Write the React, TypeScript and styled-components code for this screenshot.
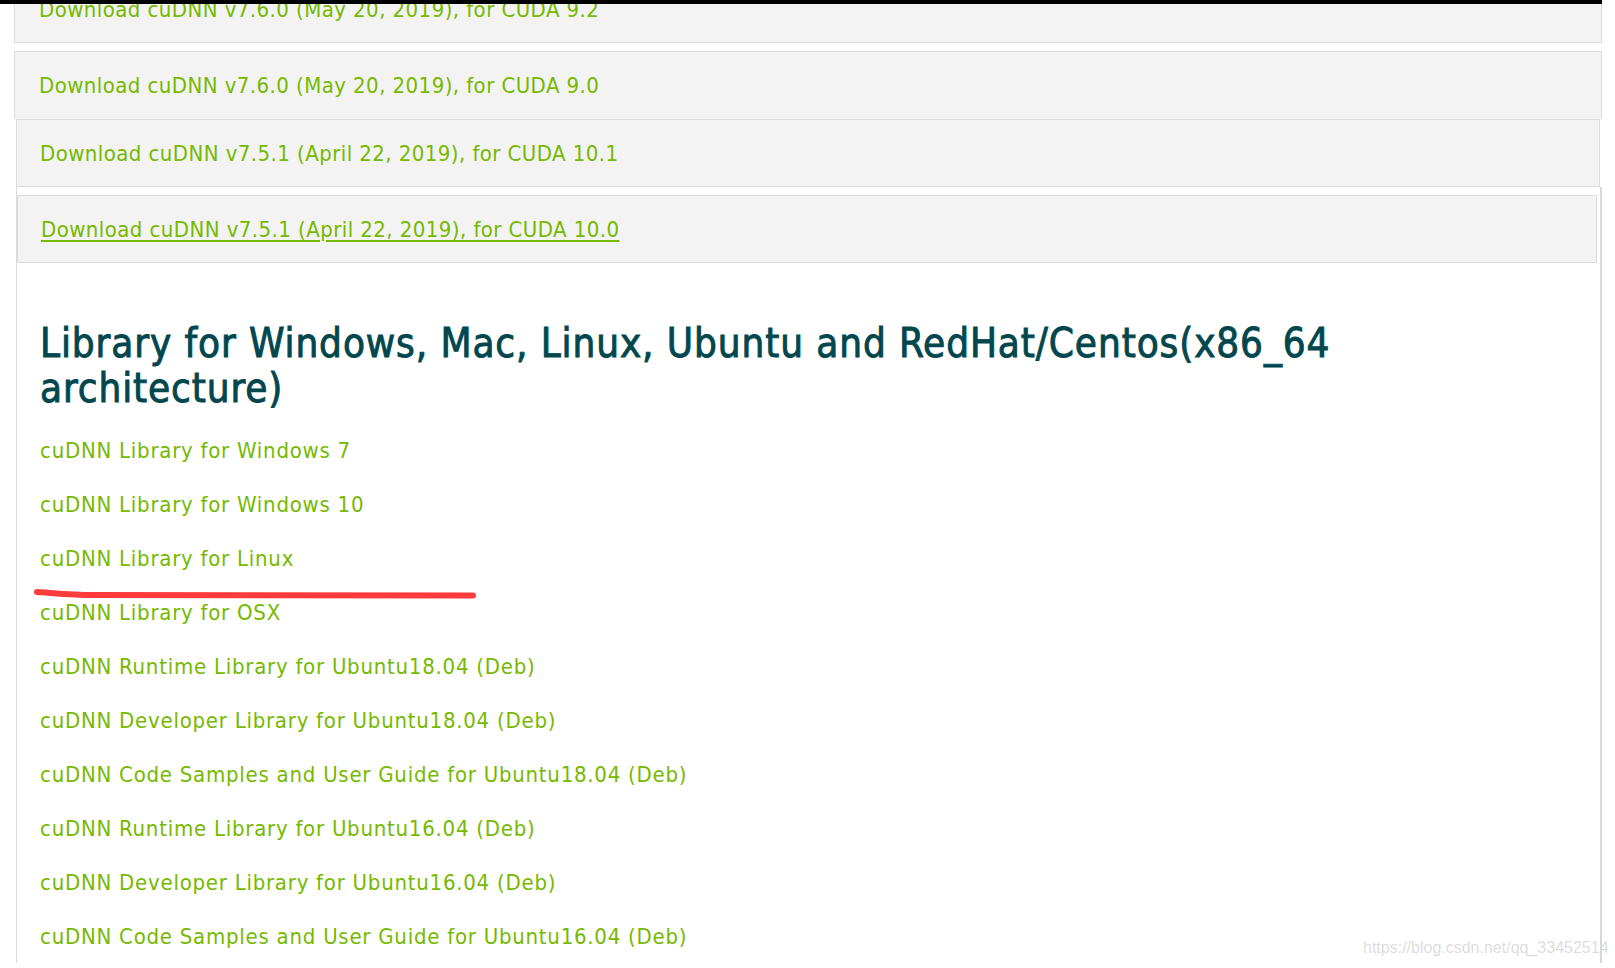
import React from 'react';
import styled, { createGlobalStyle } from 'styled-components';

const GlobalStyle = createGlobalStyle`
  html, body {
    margin: 0;
    padding: 0;
    background: #ffffff;
    overflow: hidden;
  }
  body {
    font-family: "DejaVu Sans Condensed", "Liberation Sans", sans-serif;
  }
`;

const Page = styled.div`
  position: relative;
  width: 1615px;
  height: 968px;
  overflow: hidden;
`;

const Content = styled.div`
  width: 1602px;
`;

const TopBar = styled.div`
  position: relative;
  z-index: 2;
  height: 4px;
  background: #000000;
`;

const Accordion = styled.div`
  display: flex;
  flex-direction: column;
`;

const Item = styled.div<{ $inset?: boolean; $first?: boolean; $open?: boolean }>`
  display: flex;
  align-items: center;
  box-sizing: border-box;
  height: 68px;
  margin-left: ${(p) => (p.$open ? '0' : p.$inset ? '16px' : '14px')};
  margin-right: ${(p) => (p.$open ? '3px' : p.$inset ? '2px' : '0')};
  margin-top: ${(p) => (p.$first ? '-29px' : '0')};
  margin-bottom: ${(p) => (p.$first ? '8px' : '0')};
  padding-left: ${(p) => (p.$inset || p.$open ? '23px' : '24px')};
  background: #f3f3f3;
  border: 1px solid #dcdcdc;
  border-bottom: ${(p) => (p.$first || p.$inset || p.$open ? '1px solid #dcdcdc' : 'none')};
`;

const ItemLink = styled.a<{ $underline?: boolean; $list?: boolean }>`
  font-size: 22px;
  letter-spacing: ${(p) => (p.$list ? '0.75px' : '0.43px')};
  color: #76b900;
  text-decoration: ${(p) => (p.$underline ? 'underline' : 'none')};
  text-decoration-thickness: 2px;
  text-underline-offset: 3px;
  cursor: pointer;
`;

const Section = styled.div`
  box-sizing: border-box;
  margin-left: 16px;
  padding-top: 8px;
  border-left: 1px solid #dcdcdc;
  border-right: 2px solid #d8d8d8;
  background: #ffffff;
`;

const Body = styled.div`
  padding: 0 0 0 23px;
`;

const Heading = styled.h2`
  margin: 58px 0 12px;
  max-width: 1480px;
  font-size: 40px;
  line-height: 45px;
  font-weight: 400;
  letter-spacing: 0.9px;
  -webkit-text-stroke: 0.9px #02474e;
  color: #02474e;
`;

const LinkList = styled.ul`
  list-style: none;
  margin: 0;
  padding: 0;
`;

const LinkRow = styled.li`
  height: 54px;
  display: flex;
  align-items: center;
`;

const Annotation = styled.svg`
  position: absolute;
  left: 33px;
  top: 587px;
  pointer-events: none;
`;

const Watermark = styled.div`
  position: absolute;
  left: 1363px;
  top: 939px;
  font-family: "Liberation Sans", Arial, sans-serif;
  font-size: 16px;
  color: rgba(215, 215, 215, 0.85);
  white-space: nowrap;
  pointer-events: none;
  z-index: 3;
`;

const links = [
  'cuDNN Library for Windows 7',
  'cuDNN Library for Windows 10',
  'cuDNN Library for Linux',
  'cuDNN Library for OSX',
  'cuDNN Runtime Library for Ubuntu18.04 (Deb)',
  'cuDNN Developer Library for Ubuntu18.04 (Deb)',
  'cuDNN Code Samples and User Guide for Ubuntu18.04 (Deb)',
  'cuDNN Runtime Library for Ubuntu16.04 (Deb)',
  'cuDNN Developer Library for Ubuntu16.04 (Deb)',
  'cuDNN Code Samples and User Guide for Ubuntu16.04 (Deb)',
];

const App: React.FC = () => {
  return (
    <Page>
      <GlobalStyle />
      <Content>
        <TopBar />
        <Accordion>
          <Item $first>
            <ItemLink>Download cuDNN v7.6.0 (May 20, 2019), for CUDA 9.2</ItemLink>
          </Item>
          <Item>
            <ItemLink>Download cuDNN v7.6.0 (May 20, 2019), for CUDA 9.0</ItemLink>
          </Item>
          <Item $inset>
            <ItemLink>Download cuDNN v7.5.1 (April 22, 2019), for CUDA 10.1</ItemLink>
          </Item>
        </Accordion>
        <Section>
          <Item $open>
            <ItemLink $underline>Download cuDNN v7.5.1 (April 22, 2019), for CUDA 10.0</ItemLink>
          </Item>
          <Body>
            <Heading>Library for Windows, Mac, Linux, Ubuntu and RedHat/Centos(x86_64 architecture)</Heading>
            <LinkList>
              {links.map((l) => (
                <LinkRow key={l}>
                  <ItemLink $list>{l}</ItemLink>
                </LinkRow>
              ))}
            </LinkList>
          </Body>
        </Section>
      </Content>
      {/* hand-drawn red marker under the Linux link */}
      <Annotation width="450" height="14" viewBox="0 0 450 14">
        <path
          d="M4 5 C 20 6, 40 8, 60 8 L 440 8.5"
          fill="none"
          stroke="#ff3b3b"
          strokeWidth="6"
          strokeLinecap="round"
        />
      </Annotation>
      <Watermark>https://blog.csdn.net/qq_33452514</Watermark>
    </Page>
  );
};

export default App;
